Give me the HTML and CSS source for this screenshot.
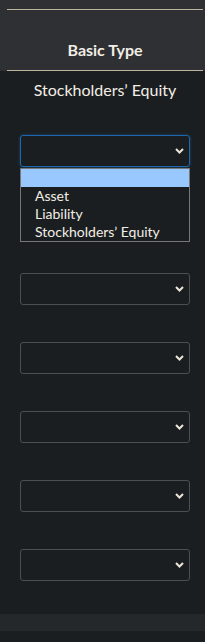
FILE: index.html
```html
<!DOCTYPE html>
<html lang="en">
<head>
<meta charset="UTF-8">
<title>Basic Type</title>
<link rel="stylesheet" href="styles.css">
</head>
<body>
<section class="panel">
	<header class="head">
		<div class="headInner">
			<h2 class="title">Basic Type</h2>
		</div>
	</header>
	<div class="value">Stockholders’ Equity</div>
	<ul class="fields">
		<li>
			<div class="select focus">
				<svg class="chev" width="9" height="6" viewBox="0 0 9 6"><polyline points="1,1 4.5,4.5 8,1"/></svg>
			</div>
			<ul class="menu">
				<li class="on"></li>
				<li>Asset</li>
				<li>Liability</li>
				<li>Stockholders’ Equity</li>
			</ul>
		</li>
		<li>
			<div class="select">
				<svg class="chev" width="9" height="6" viewBox="0 0 9 6"><polyline points="1,1 4.5,4.5 8,1"/></svg>
			</div>
		</li>
		<li>
			<div class="select">
				<svg class="chev" width="9" height="6" viewBox="0 0 9 6"><polyline points="1,1 4.5,4.5 8,1"/></svg>
			</div>
		</li>
		<li>
			<div class="select">
				<svg class="chev" width="9" height="6" viewBox="0 0 9 6"><polyline points="1,1 4.5,4.5 8,1"/></svg>
			</div>
		</li>
		<li>
			<div class="select">
				<svg class="chev" width="9" height="6" viewBox="0 0 9 6"><polyline points="1,1 4.5,4.5 8,1"/></svg>
			</div>
		</li>
		<li>
			<div class="select">
				<svg class="chev" width="9" height="6" viewBox="0 0 9 6"><polyline points="1,1 4.5,4.5 8,1"/></svg>
			</div>
		</li>
		<li>
			<div class="select">
				<svg class="chev" width="9" height="6" viewBox="0 0 9 6"><polyline points="1,1 4.5,4.5 8,1"/></svg>
			</div>
		</li>
	</ul>
	<div class="foot"></div>
</section>
</body>
</html>
```

FILE: styles.css
```css
html,
body {
	margin: 0;
	background: #1b1e20;
}
h2 {
	margin: 0;
}
ul {
	margin: 0;
	padding: 0;
	list-style: none;
}
.panel {
	font-family: Lato, "Liberation Sans", sans-serif;
	color: #f2eee6;
}
.head {
	background: #2e3033;
	padding-top: 9px;
}
.headInner {
	margin: 0 2px 0 7px;
	border-top: 1px solid #bdb59f;
	border-bottom: 1px solid #bdb59f;
}
.title {
	font: bold 16px/19px Lato, "Liberation Sans", sans-serif;
	text-align: center;
	padding: 30px 0 11px;
}
.value {
	margin: 9px 2px 0 7px;
	font: 16px/19px Lato, "Liberation Sans", sans-serif;
	text-align: center;
}
.fields {
	margin: 36px 15px 0 20px;
}
.fields > li {
	position: relative;
	margin-bottom: 37px;
}
.select {
	display: flex;
	align-items: center;
	justify-content: flex-end;
	box-sizing: border-box;
	height: 32px;
	padding-right: 5px;
	border: 1px solid #4b4f52;
	border-radius: 3px;
}
.select.focus {
	border-color: #1d68ad;
	box-shadow: 0 0 3px rgba(29, 104, 173, .6);
}
.chev polyline {
	fill: none;
	stroke: #ece6da;
	stroke-width: 2;
}
.menu {
	position: absolute;
	left: 0;
	right: 0;
	top: 33px;
	z-index: 2;
	background: #1b1e20;
	border: 1px solid #767676;
	font: 14px/18px Lato, "Liberation Sans", sans-serif;
}
.menu li {
	height: 18px;
	padding-left: 14px;
}
.menu li.on {
	background: #99c8ff;
}
.foot {
	margin-top: -4px;
	height: 17px;
	background: #25282a;
	margin-bottom: 9px;
}
.foot::after {
	content: "";
	display: block;
	position: relative;
	top: 26px;
	height: 1px;
	background: #4a4d50;
}
```
